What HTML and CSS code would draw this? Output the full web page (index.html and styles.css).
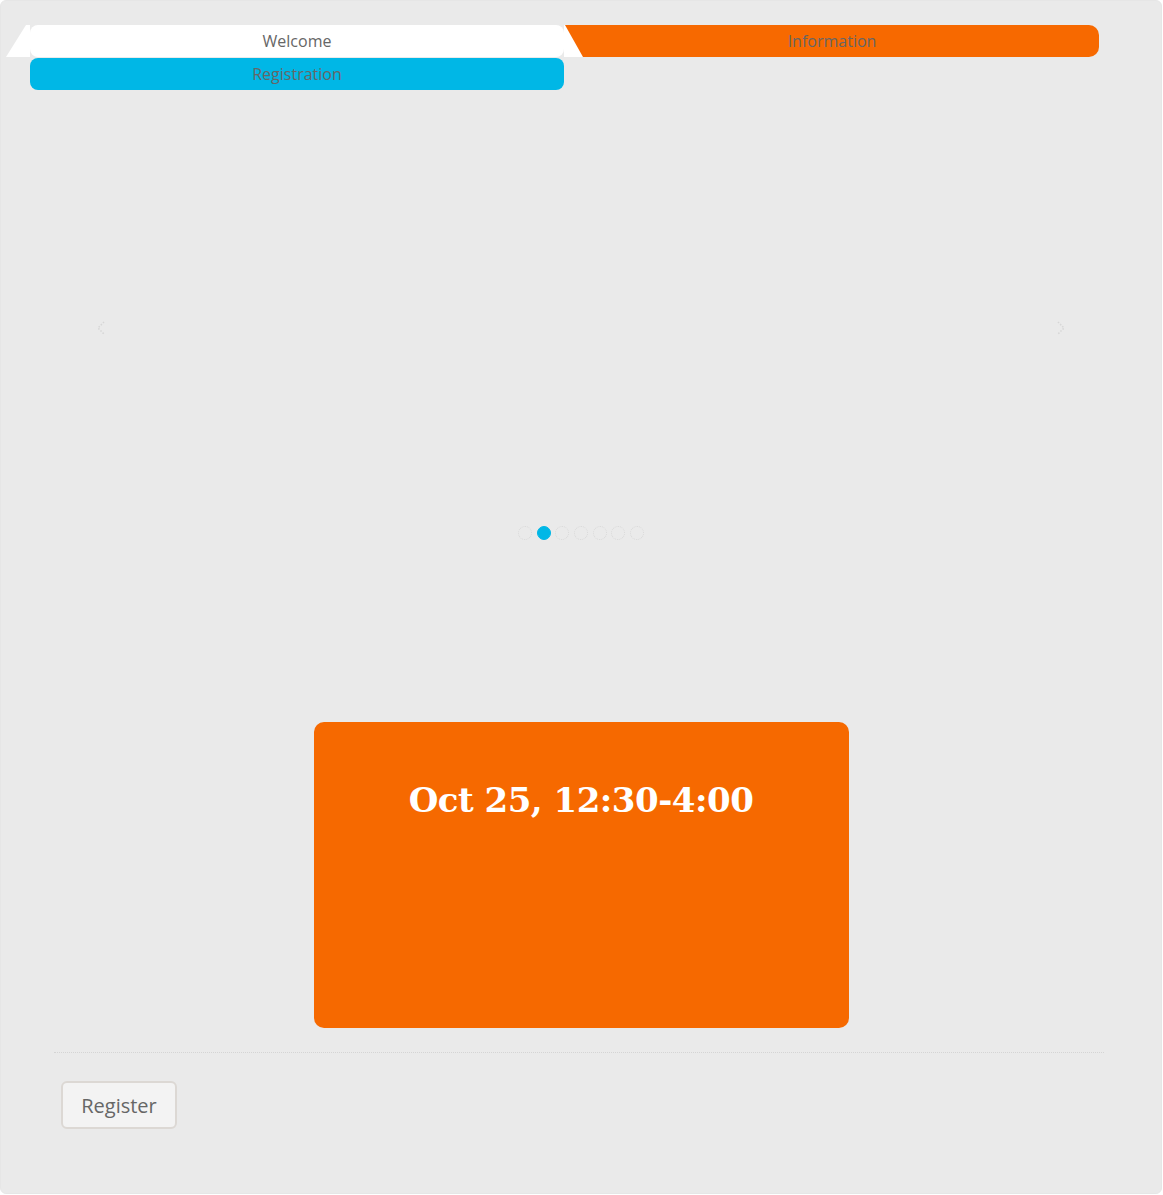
FILE: index.html
```html
<!DOCTYPE html>
<html lang="en">
<head>
<meta charset="utf-8">
<title>Event</title>
<link rel="stylesheet" href="styles.css">
</head>
<body>
<div class="page">
  <nav class="tabs">
    <a class="tab tab-welcome">Welcome</a>
    <a class="tab tab-info">Information</a>
    <a class="tab tab-reg">Registration</a>
  </nav>

  <section class="carousel">
    <button class="arrow arrow-prev" aria-label="Previous">
      <svg width="12" height="16" viewBox="0 0 12 16"><polyline points="9,2 3,8 9,14" fill="none" stroke="#d6d6d6" stroke-width="1.5" stroke-dasharray="1.5 1.5"/></svg>
    </button>
    <button class="arrow arrow-next" aria-label="Next">
      <svg width="12" height="16" viewBox="0 0 12 16"><polyline points="3,2 9,8 3,14" fill="none" stroke="#d6d6d6" stroke-width="1.5" stroke-dasharray="1.5 1.5"/></svg>
    </button>
    <div class="dots">
      <span class="dot"></span>
      <span class="dot active"></span>
      <span class="dot"></span>
      <span class="dot"></span>
      <span class="dot"></span>
      <span class="dot"></span>
      <span class="dot"></span>
    </div>
  </section>

  <div class="card">
    <h2 class="card-title">Oct 25, 12:30-4:00</h2>
  </div>

  <hr class="divider">

  <div class="actions">
    <button class="btn">Register</button>
  </div>
</div>
</body>
</html>
```

FILE: styles.css
```css
html, body {
  margin: 0;
  padding: 0;
  background: #ffffff;
}

.page {
  width: 1160px;
  height: 1192px;
  background: #eaeaea;
  border: 1px solid #e6e6e6;
  border-radius: 6px;
  font-family: "Open Sans", "Noto Sans", sans-serif;
  color: #666;
  overflow: hidden;
}

.tabs {
  display: grid;
  grid-template-columns: 534px 534px;
  column-gap: 1px;
  row-gap: 1px;
  padding: 24px 0 0 29px;
}

.tab {
  position: relative;
  display: flex;
  align-items: center;
  justify-content: center;
  height: 32px;
  font-size: 16px;
  color: #666;
  border-radius: 8px;
}

.tab-welcome {
  background: #ffffff;
  z-index: 2;
}

.tab-welcome::before {
  content: "";
  position: absolute;
  left: -24px;
  top: 0;
  width: 4px;
  height: 0;
  border-bottom: 32px solid #ffffff;
  border-left: 20px solid transparent;
}

.tab-welcome::after {
  content: "";
  position: absolute;
  left: 100%;
  top: 0;
  width: 1px;
  height: 0;
  border-bottom: 32px solid #ffffff;
  border-right: 18px solid transparent;
}

.tab-info {
  background: #f76900;
  border-radius: 0 10px 10px 0;
  z-index: 1;
}

.tab-reg {
  background: #00b7e6;
  grid-column: 1;
}

.carousel {
  position: relative;
  height: 476px;
}

.arrow {
  position: absolute;
  top: 50%;
  transform: translateY(-50%);
  background: none;
  border: 0;
  padding: 0;
  width: 12px;
  height: 16px;
  display: flex;
}

.arrow-prev { left: 94px; }
.arrow-next { right: 94px; }

.dots {
  position: absolute;
  left: 0;
  right: 0;
  bottom: 26px;
  display: flex;
  justify-content: center;
  gap: 4.6px;
}

.dot {
  width: 12px;
  height: 12px;
  border: 1px dotted #d8d8d8;
  border-radius: 50%;
}

.dot.active {
  background: #00b7e6;
  border: 1px solid #00b7e6;
}

.card {
  width: 535px;
  height: 306px;
  margin: 156px auto 0;
  background: #f66900;
  border-radius: 10px;
  padding-top: 54px;
  box-sizing: border-box;
  text-align: center;
}

.card-title {
  margin: 0;
  font-family: "DejaVu Serif", "Liberation Serif", serif;
  font-weight: bold;
  font-size: 34px;
  line-height: 48px;
  color: #ffffff;
  letter-spacing: -0.5px;
}

.divider {
  margin: 24px 57px 0 53px;
  border: 0;
  border-top: 1px dotted #d4d4d4;
  height: 0;
}

.actions {
  padding: 28px 0 0 60px;
}

.btn {
  width: 116px;
  height: 48px;
  background: #f3f3f3;
  border: 2px solid #dcd8d4;
  border-radius: 6px;
  font-family: "Open Sans", "Noto Sans", sans-serif;
  font-size: 20px;
  color: #666;
  padding: 0;
}
```
